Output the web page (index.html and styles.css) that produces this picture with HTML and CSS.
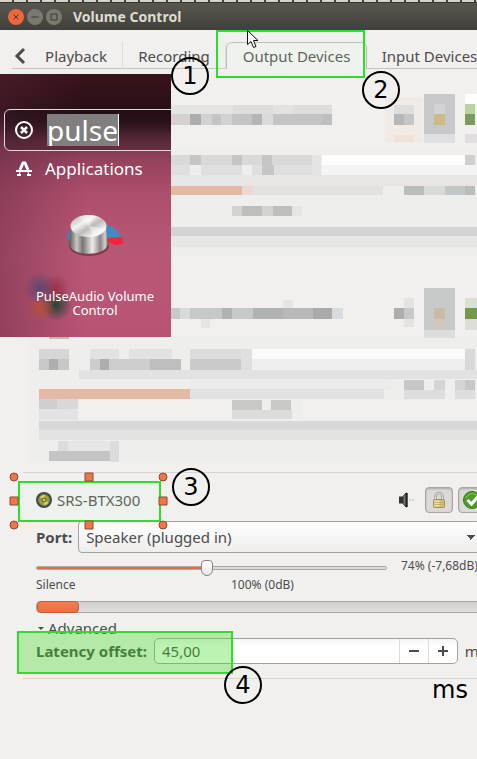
FILE: index.html
```html
<!DOCTYPE html>
<html lang="en">
	
	<head>
		<meta charset="utf-8">
		<title>Volume Control</title>
		<link rel="stylesheet" href="styles.css">
	</head>
	
	<body>
	
	<div class="window">
		<div class="ruler"></div>
		<header class="titlebar">
			<button class="winBut close" aria-label="Close"><svg viewBox="0 0 16 16"><path d="M5.500 5.500l5 5M10.500 5.500l-5 5"/></svg></button>
			<button class="winBut" aria-label="Minimize"><svg viewBox="0 0 16 16"><path d="M4.500 8h7"/></svg></button>
			<button class="winBut" aria-label="Maximize"><svg viewBox="0 0 16 16"><path d="M5 5h6v6H5z"/></svg></button>
			<h1>Volume Control</h1>
		</header>

		<!-- Tabs -->
		<nav class="tabs">
			<button class="back" aria-label="Previous tab"><svg width="12" height="18" viewBox="0 0 12 18"><path d="M10 2L3 9l7 7" fill="none" stroke="#4a4a4a" stroke-width="3"/></svg></button>
			<button class="tablinks">Playback</button>
			<button class="tablinks">Recording</button>
			<button class="tablinks active">Output Devices</button>
			<button class="tablinks">Input Devices</button>
		</nav>

		<!-- Redacted devices -->
		<div class="redacted">
			<svg width="477" height="403" viewBox="0 69 477 403" shape-rendering="crispEdges" aria-hidden="true">
				<path fill="#eeeeed" d="M28 150h449v105H28zM28 337h449v125H28z"/>
				<!-- first device -->
				<path fill="#e4e4e4" d="M171 105h62v9h-62z"/>
				<path fill="#dddddc" d="M233 105h40v9h-40zM293 105h39v9h-39z"/>
				<path fill="#e2e2e1" d="M273 105h20v9h-20z"/>
				<path fill="#d6d0ce" d="M171 114h19v11h-19z"/>
				<path fill="#adadad" d="M190 114h11v11h-11z"/>
				<path fill="#d2d2d2" d="M201 114h11v11h-11zM221 114h11v11h-11z"/>
				<path fill="#c4c4c6" d="M212 114h9v11h-9zM232 114h20v11h-20z"/>
				<path fill="#b5b5b5" d="M252 114h10v11h-10z"/>
				<path fill="#dadada" d="M262 114h11v11h-11z"/>
				<path fill="#c5c4c4" d="M273 114h49v11h-49z"/>
				<path fill="#bebebe" d="M322 114h10v11h-10z"/>
				<path fill="#f1ebe8" d="M385 97h38v46h-38z"/>
				<path fill="#dededd" d="M394 105h20v9h-20z"/>
				<path fill="#b7b7b7" d="M394 114h10v11h-10z"/>
				<path fill="#c6c6c6" d="M404 114h10v11h-10z"/>
				<path fill="#f0e2d7" d="M394 135h20v7h-20z"/>
				<path fill="#c8c8ca" d="M424 94h31v40h-31z"/>
				<path fill="#d2d2d4" d="M434 104h11v10h-11z"/>
				<path fill="#dfdfe2" d="M424 134h31v9h-31zM465 134h12v9h-12z"/>
				<path fill="#cdbb83" d="M434 114h11v11h-11z"/>
				<path fill="#fff" d="M465 94h12v10h-12z"/>
				<path fill="#b9d3a1" d="M465 104h10v10h-10z"/>
				<path fill="#7b9c5c" d="M465 114h10v11h-10z"/>
				<path fill="#d9d9da" d="M171 155h141v10H171z"/>
				<path fill="#c5c5c7" d="M190 155h11v10h-11zM232 155h10v10h-10zM262 155h10v10h-10z"/>
				<path fill="#dfdfe0" d="M171 165h19v10h-19zM201 165h41v10h-41zM252 165h60v10h-60z"/>
				<path fill="#c6c6c7" d="M262 165h12v10h-12z"/>
				<path fill="#e4e4e5" d="M312 155h9v20h-9z"/>
				<path fill="#fdfdfd" d="M322 155h143v10H322z"/>
				<path fill="#f4f4f4" d="M322 165h155v10H322z"/>
				<path fill="#cfced1" d="M465 155h10v10h-10z"/>
				<path fill="#e7e6e5" d="M171 175h306v11H171z"/>
				<path fill="#e4b9a4" d="M171 186h71v9h-71z"/>
				<path fill="#ecd8d0" d="M242 186h11v9h-11z"/>
				<path fill="#e3e2e1" d="M253 186h130v9H253z"/>
				<path fill="#b9bdbc" d="M404 186h20v9h-20zM465 186h10v9h-10z"/>
				<path fill="#d7dad9" d="M424 186h21v9h-21z"/>
				<path fill="#c4c7c7" d="M445 186h20v9h-20z"/>
				<path fill="#d3d3d3" d="M232 206h10v10h-10zM262 206h11v10h-11z"/>
				<path fill="#bdbebd" d="M242 206h20v10h-20zM273 206h19v10h-19z"/>
				<path fill="#e4e5e4" d="M292 206h10v10h-10z"/>
				<path fill="#d3d3d3" d="M171 227h306v9H171z"/>
				<path fill="#e6e6e6" d="M171 236h306v11H171z"/>
				<!-- second device -->
				<path fill="#c7c8c8" d="M171 308h82v11h-82z"/>
				<path fill="#b1b2b2" d="M222 308h10v11h-10zM253 308h30v11h-30z"/>
				<path fill="#d9dada" d="M180 308h10v11h-10z"/>
				<path fill="#b8b9b8" d="M283 308h30v11h-30z"/>
				<path fill="#aaa" d="M313 308h19v11h-19z"/>
				<path fill="#dadbdc" d="M332 308h11v11h-11z"/>
				<path fill="#e5e5e5" d="M201 319h9v9h-9zM283 300h10v8h-10z"/>
				<path fill="#adadae" d="M394 308h10v11h-10z"/>
				<path fill="#c7c8c8" d="M404 308h10v11h-10z"/>
				<path fill="#e2e3e2" d="M404 298h10v10h-10zM404 319h10v8h-10z"/>
				<path fill="#c8caca" d="M424 288h31v42h-31z"/>
				<path fill="#dcdddd" d="M424 330h31v8h-31zM465 319h12v11h-12z"/>
				<path fill="#ccb9a6" d="M434 308h11v11h-11z"/>
				<path fill="#d2c7bb" d="M434 319h11v9h-11z"/>
				<path fill="#d9e0d4" d="M465 298h12v10h-12z"/>
				<path fill="#719b4b" d="M465 308h12v11h-12z"/>
				<path fill="#bdbca9" d="M49 337h20v2H49z"/>
				<path fill="#d6d6d6" d="M39 349h30v10H39z"/>
				<path fill="#c8c8c8" d="M39 359h30v11H39z"/>
				<path fill="#aeaeae" d="M49 359h9v11h-9zM100 359h9v11h-9z"/>
				<path fill="#e2e2e2" d="M90 349h29v10H90zM129 349h43v10h-43z"/>
				<path fill="#cdcdcd" d="M90 359h10v11H90zM109 359h41v11h-41z"/>
				<path fill="#bebebe" d="M150 359h31v11h-31z"/>
				<path fill="#dcdcdc" d="M190 349h51v10h-51z"/>
				<path fill="#cacaca" d="M190 359h51v11h-51z"/>
				<path fill="#dfdfdf" d="M241 349h11v21h-11z"/>
				<path fill="#fafafa" d="M252 349h213v10H252z"/>
				<path fill="#efeff0" d="M252 359h213v11H252z"/>
				<path fill="#d9d9da" d="M465 349h10v21h-10z"/>
				<path fill="#e3e2e3" d="M79 370h398v9H79z"/>
				<path fill="#ecebec" d="M190 379h201v11H190z"/>
				<path fill="#e6b9a4" d="M39 389h151v10H39z"/>
				<path fill="#e1e1e1" d="M190 389h194v10H190z"/>
				<path fill="#c8c7c8" d="M404 380h20v10h-20zM465 380h10v10h-10z"/>
				<path fill="#d6d5d6" d="M434 380h11v10h-11zM455 380h10v10h-10z"/>
				<path fill="#deddde" d="M404 390h41v9h-41zM455 390h20v9h-20z"/>
				<path fill="#cfcfcf" d="M39 399h18v10H39z"/>
				<path fill="#d8d8d8" d="M57 399h21v10H57z"/>
				<path fill="#c8c8c8" d="M232 400h30v10h-30zM271 400h20v10h-20z"/>
				<path fill="#dcdcdb" d="M232 410h60v9h-60z"/>
				<path fill="#e3e3e3" d="M39 409h39v11H39z"/>
				<path fill="#f1f0ee" d="M79 400h153v20H79zM302 400h175v20H302z"/>
				<path fill="#d7d8d7" d="M39 421h438v9H39z"/>
				<path fill="#e2e3e2" d="M39 430h438v10H39z"/>
				<path fill="#dcdcdc" d="M58 441h10v10H58zM110 441h9v21h-9z"/>
				<path fill="#e6e6e6" d="M68 441h42v10H68z"/>
				<path fill="#c4c4c4" d="M49 451h61v10H49z"/>
			</svg>
		</div>

		<!-- Output device -->
		<section class="device">
			<div class="deviceHead">
				<svg class="deviceIcon" width="16" height="16" viewBox="0 0 16 16">
					<circle cx="8" cy="8" r="8" fill="#2c312e"/>
					<circle cx="8" cy="8" r="5.500" fill="#9c8f1c" stroke="#666a60"/>
					<path d="M8 8L4 5A5 5 0 0 1 9 3zM8 8l4.500 2.500A5 5 0 0 1 8 13z" fill="#dccb38"/>
					<circle cx="8" cy="8" r="2" fill="#d6c847" stroke="#393b27"/>
				</svg>
				<h2>SRS-BTX300</h2>
				<button class="mute" aria-label="Mute"><svg width="18" height="18" viewBox="0 0 18 18">
					<path d="M1 5.500h4v7H1z" fill="#333"/>
					<path d="M5 5.500L8 2h1v14H8L5 12.500z" fill="#777" stroke="#333"/>
					<path d="M8.500 2v14" stroke="#222" stroke-width="2"/>
					<path d="M11 9h6" stroke="#bbb" stroke-dasharray="2 1"/>
				</svg></button>
				<button class="toggle" aria-label="Lock channels"><svg width="16" height="18" viewBox="0 0 16 18">
					<path d="M4.500 9V5.500a3.500 3.500 0 0 1 7 0V9" fill="none" stroke="#9a9a95" stroke-width="2.500"/>
					<path d="M4.500 9V5.500a3.500 3.500 0 0 1 7 0V9" fill="none" stroke="#e6e6e0"/>
					<rect x="2.500" y="8.500" width="11" height="8" rx="1" fill="#d5bd70" stroke="#a08e5e"/>
					<path d="M3.500 9.500h5v6h-5z" fill="#f0e4ae"/>
					<path d="M4 11.500h8M4 13.500h8" stroke="#c4ae6a"/>
				</svg></button>
				<button class="toggle" aria-label="Set as fallback"><svg width="18" height="18" viewBox="0 0 18 18">
					<circle cx="9" cy="9" r="8.500" fill="#4e9c28" stroke="#32751a"/>
					<path d="M3 7a6.500 6.500 0 0 1 11-2" stroke="#8fc66d" fill="none"/>
					<path d="M4.500 9l4 4 6-7" fill="none" stroke="#fff" stroke-width="3"/>
				</svg></button>
			</div>

			<div class="port">
				<label for="port">Port:</label>
				<select id="port">
					<option>Speaker (plugged in)</option>
				</select>
			</div>

			<div class="volume">
				<input type="range" id="vol" min="0" max="152" value="74" aria-label="Volume">
				<output for="vol">74% (-7,68dB)</output>
			</div>
			<div class="marks"><span>Silence</span><span>100% (0dB)</span></div>
			<div class="meter"><div class="level"></div></div>

			<details open>
				<summary>Advanced</summary>
				<div class="latency">
					<label for="latency">Latency offset:</label>
					<div class="spin">
						<input type="text" id="latency" value="45,00">
						<button aria-label="Decrease"><svg width="12" height="12" viewBox="0 0 12 12"><path d="M1 6h10"/></svg></button>
						<button aria-label="Increase"><svg width="12" height="12" viewBox="0 0 12 12"><path d="M1 6h10M6 1v10"/></svg></button>
					</div>
					<span>ms</span>
				</div>
			</details>
		</section>
	</div>

	<!-- Dash search, lies over the window -->
	<aside class="dash">
		<div class="search">
			<svg width="20" height="20" viewBox="0 0 20 20" fill="none" stroke="#fff" stroke-width="2"><circle cx="10" cy="10" r="8"/><path d="M7 7l6 6M13 7l-6 6" stroke-width="2.500"/></svg>
			<input type="text" value="pulse" aria-label="Search">
		</div>
		<h2><svg width="16" height="16" viewBox="0 0 16 16" fill="none" stroke="#fff"><path d="M4 9L7 2h2l3 7" stroke-width="3"/><path d="M0 10h16" stroke-width="2"/><path d="M1 14h4M11 14h4" stroke-width="2"/><path d="M3 14l1-3M13 14l-1-3"/></svg>Applications</h2>
		<a class="app" href="#">
			<svg width="60" height="48" viewBox="0 0 60 48">
				<defs>
					<linearGradient id="side"><stop offset="0" stop-color="#555"/><stop offset=".2" stop-color="#c9c7c4"/><stop offset=".35" stop-color="#777370"/><stop offset=".6" stop-color="#eeeceb"/><stop offset=".8" stop-color="#8c8784"/><stop offset=".93" stop-color="#d4d1cf"/><stop offset="1" stop-color="#666"/></linearGradient>
					<linearGradient id="cap" x2="1" y2="1"><stop offset="0" stop-color="#a9a7a5"/><stop offset=".35" stop-color="#f3f2f1"/><stop offset=".55" stop-color="#bdbab8"/><stop offset=".8" stop-color="#f8f8f7"/><stop offset="1" stop-color="#aaa"/></linearGradient>
				</defs>
				<path d="M2 26q1-7 7-9l-1 8-3 5z" fill="#3e83bd"/>
				<path d="M38 12q14 4 18 14l-16 1z" fill="#438ac4"/>
				<path d="M42 27l15-1 1 7-7 1-9-3z" fill="#f2253a"/>
				<ellipse cx="24" cy="35" rx="20" ry="10" fill="#5d2639" opacity=".6"/>
				<path d="M6 17L4 33c2 13 37 13 39 0l-2-16z" fill="url(#side)"/>
				<ellipse cx="23.500" cy="15" rx="18" ry="11" fill="url(#cap)"/>
				<path d="M23.500 15L14 6q9-4 17-1zM23.500 15L41 18q-3 6-12 8z" fill="#fff" opacity=".45"/>
			</svg>
			<span>PulseAudio Volume Control</span>
		</a>
	</aside>

	<!-- Callouts -->
	<div class="mark markTab"></div>
	<div class="mark markDevice"></div>
	<div class="mark markLatency"></div>
	<svg class="handles" width="160" height="58" viewBox="0 0 160 58" fill="#ee7647" stroke="#8c4a35">
		<circle cx="5" cy="5" r="4"/><circle cx="154" cy="5" r="4"/><circle cx="5" cy="53" r="4"/><circle cx="154" cy="53" r="4"/>
		<path d="M76 1h8v8h-8zM76 49h8v8h-8zM1 25h8v8H1zM150 25h8v8h-8z"/>
	</svg>
	<div class="step step1">1</div>
	<div class="step step2">2</div>
	<div class="step step3">3</div>
	<div class="step step4">4</div>
	<div class="unit">ms</div>
	<svg class="cursor" width="14" height="20" viewBox="0 0 14 20"><path d="M1.500 1.500v14l3.500-3 2.500 6 2.500-1-2.500-6h4.500z" fill="#fff" stroke="#111"/></svg>
	
	</body>
	
</html>
```
FILE: styles.css
```css
* {
	box-sizing: border-box;
}

body {
	margin: 0;
	position: relative;
	min-height: 100vh;
	overflow: hidden;
	background-color: #f1f0ef;
	color: #4c4c4c;
	font-family: "Noto Sans", sans-serif;
	font-size: 15px;
	line-height: 20px;
}

button, input, select {
	font: inherit;
	color: inherit;
	margin: 0;
	padding: 0;
	border: none;
	background: none;
}

h1, h2 {
	margin: 0;
	font-size: 15px;
}

.window {
	overflow: hidden;
}

.ruler {
	height: 2px;
	background: repeating-linear-gradient(90deg, #d4d4cc 0 12px, #444 12px 14px);
}

/* Title bar */
.titlebar {
	display: flex;
	align-items: center;
	gap: 3px;
	height: 28px;
	padding-left: 8px;
	background: linear-gradient(#59574f, #403f3a);
	border-top: 1px solid #35342f;
	color: #dfdbd2;
}

.titlebar h1 {
	margin-left: 8px;
	font-size: 14px;
}

.winBut {
	width: 16px;
	height: 16px;
	border-radius: 50%;
	background: #7b796f;
}

.winBut svg {
	display: block;
	fill: none;
	stroke: #3b3a35;
}

.close {
	background: #f0653a;
}

/* Tabs */
.tabs {
	display: grid;
	grid-template-columns: 18px 93px 103px 141px 126px;
	height: 39px;
	padding: 12px 0 0 12px;
	background: linear-gradient(#c4c3c1, #c4c3c1) 12px 38px / 100% 1px no-repeat;
}

.back {
	display: flex;
	align-items: center;
	padding-left: 2px;
}

.tablinks {
	border-right: 1px solid #dddcda;
	white-space: nowrap;
}

.tablinks.active {
	background: #f3f2f1;
	border: 1px solid #b9b8b6;
	border-bottom: none;
	border-radius: 6px 6px 0 0;
}

.redacted svg {
	display: block;
}

/* Output device */
.device {
	margin: 0 -9px 0 23px;
	padding: 10px 0 14px 13px;
	border-top: 1px solid #d6d5d3;
	border-bottom: 1px solid #d6d5d3;
}

.deviceHead {
	display: flex;
	align-items: center;
	gap: 5px;
	height: 34px;
}

.deviceHead h2 {
	flex: 1;
	font-weight: normal;
}

.mute {
	display: flex;
	margin-right: 4px;
}

.toggle {
	display: flex;
	align-items: center;
	justify-content: center;
	width: 28px;
	height: 26px;
	border: 1px solid #a7a4a1;
	border-radius: 4px;
	background: #dcd9d7;
	box-shadow: inset 0 1px 2px #aaa8a5;
}

.port {
	display: flex;
	align-items: center;
	gap: 6px;
	margin-top: 4px;
}

.port label,
.latency label {
	font-weight: bold;
}

.port select {
	flex: 1;
	height: 32px;
	padding-left: 7px;
	appearance: none;
	border: 1px solid #a3a19f;
	border-radius: 4px;
	background:
		conic-gradient(from -45deg at 50% 100%, #4c4c4c 90deg, transparent 0) right 9px center / 10px 5px no-repeat,
		linear-gradient(#fff, #eeedec);
	/* arrow points down */
	background:
		linear-gradient(to bottom right, #4c4c4c 50%, transparent 50%) right 9px center / 5px 5px no-repeat,
		linear-gradient(to bottom left, #4c4c4c 50%, transparent 50%) right 14px center / 5px 5px no-repeat,
		linear-gradient(#fff, #eeedec);
}

.volume {
	display: flex;
	gap: 14px;
	height: 22px;
	margin-top: 3px;
	font-size: 12px;
}

.volume input {
	flex: 1;
	min-width: 0;
	appearance: none;
	height: 24px;
}

.volume input::-webkit-slider-runnable-track {
	height: 4px;
	border-radius: 2px;
	border: 1px solid #aaa8a6;
	background: linear-gradient(90deg, #e27043 49%, #dcdbda 49%);
}

.volume input::-webkit-slider-thumb {
	appearance: none;
	width: 12px;
	height: 16px;
	margin-top: -7px;
	border: 1px solid #858381;
	border-radius: 4px 4px 6px 6px;
	background: linear-gradient(#fff, #e9e8e7);
}

.volume output {
	width: 85px;
	white-space: nowrap;
}

.marks {
	display: grid;
	grid-template-columns: 195px 1fr;
	font-size: 12px;
	line-height: 14px;
}

.meter {
	height: 12px;
	margin-top: 9px;
	border: 1px solid #aaa8a6;
	border-radius: 4px;
	background: linear-gradient(#cfcecd, #e0dfde);
}

.level {
	width: 42px;
	height: 12px;
	margin-top: -1px;
	border: 1px solid #c85c34;
	border-radius: 4px;
	background: linear-gradient(#f0804f, #e96f40);
}

summary {
	display: flex;
	align-items: center;
	gap: 4px;
	height: 20px;
	margin-top: 5px;
	padding-left: 2px;
}

summary::before {
	content: "";
	border: 3px solid transparent;
	border-top-color: #4c4c4c;
	border-bottom: none;
}

.latency {
	display: flex;
	align-items: center;
	gap: 7px;
}

.spin {
	flex: 1;
	display: flex;
	height: 26px;
	border: 1px solid #a3a19f;
	border-radius: 5px;
	background: linear-gradient(#f6f5f5, #fff 30%);
}

.spin input {
	flex: 1;
	min-width: 0;
	padding-left: 7px;
}

.spin button {
	display: flex;
	align-items: center;
	justify-content: center;
	width: 29px;
	border-left: 1px solid #dddcdb;
}

.spin svg {
	fill: none;
	stroke: #4c4c4c;
	stroke-width: 2;
}

/* Dash */
.dash {
	position: absolute;
	left: 0;
	top: 74px;
	width: 171px;
	height: 263px;
	padding-top: 35px;
	overflow: hidden;
	color: #fff;
	background:
		radial-gradient(circle at 40px 214px, #394473aa, transparent 16px),
		radial-gradient(circle at 56px 214px, #992236aa, transparent 14px),
		radial-gradient(circle at 41px 234px, #b85030dd, transparent 14px),
		radial-gradient(circle at 56px 231px, #244434, transparent 16px),
		linear-gradient(90deg, #5a253b66, transparent 50%),
		linear-gradient(#3b131b 0, #271015 35px, #321620 48px, #78384e 68px, #98435f 90px, #ad4e6c 120px, #b95776 180px, #b95374);
}

.search {
	display: flex;
	align-items: center;
	gap: 13px;
	height: 42px;
	margin: 0 -10px 0 4px;
	padding-left: 9px;
	border: 1px solid #e8d7dc;
	border-radius: 6px;
	background: #14060b44;
}

.search input {
	width: 72px;
	height: 32px;
	background: #7f7f7f;
	border-right: 1px solid #fff;
	font-size: 28px;
	line-height: 32px;
}

.dash h2 {
	display: flex;
	align-items: center;
	gap: 13px;
	height: 36px;
	padding-left: 16px;
	font-size: 17px;
	font-weight: normal;
}

.app {
	display: flex;
	flex-direction: column;
	align-items: center;
	gap: 30px;
	width: 134px;
	margin: 24px 0 0 28px;
	color: #fff;
	font-size: 13px;
	line-height: 14px;
	text-align: center;
	text-decoration: none;
}

/* Callouts */
.mark {
	position: absolute;
	border: 2px solid #2be02b;
	background: #d8ffd822;
	pointer-events: none;
}

.markTab {
	left: 216px;
	top: 30px;
	width: 149px;
	height: 48px;
}

.markDevice {
	left: 18px;
	top: 481px;
	width: 143px;
	height: 41px;
}

.markLatency {
	left: 17px;
	top: 631px;
	width: 216px;
	height: 43px;
	background: #41dc2359;
}

.handles {
	position: absolute;
	left: 9px;
	top: 472px;
}

.step {
	position: absolute;
	width: 38px;
	height: 38px;
	border: 2px solid #000;
	border-radius: 50%;
	color: #000;
	font-family: "DejaVu Sans", sans-serif;
	font-size: 24px;
	line-height: 34px;
	text-align: center;
}

.step1 {
	left: 171px;
	top: 57px;
}

.step2 {
	left: 362px;
	top: 71px;
}

.step3 {
	left: 172px;
	top: 468px;
}

.step4 {
	left: 224px;
	top: 666px;
}

.unit {
	position: absolute;
	left: 432px;
	top: 676px;
	color: #000;
	font-family: "DejaVu Sans", sans-serif;
	font-size: 24px;
	line-height: 28px;
}

.cursor {
	position: absolute;
	left: 246px;
	top: 29px;
}
```
